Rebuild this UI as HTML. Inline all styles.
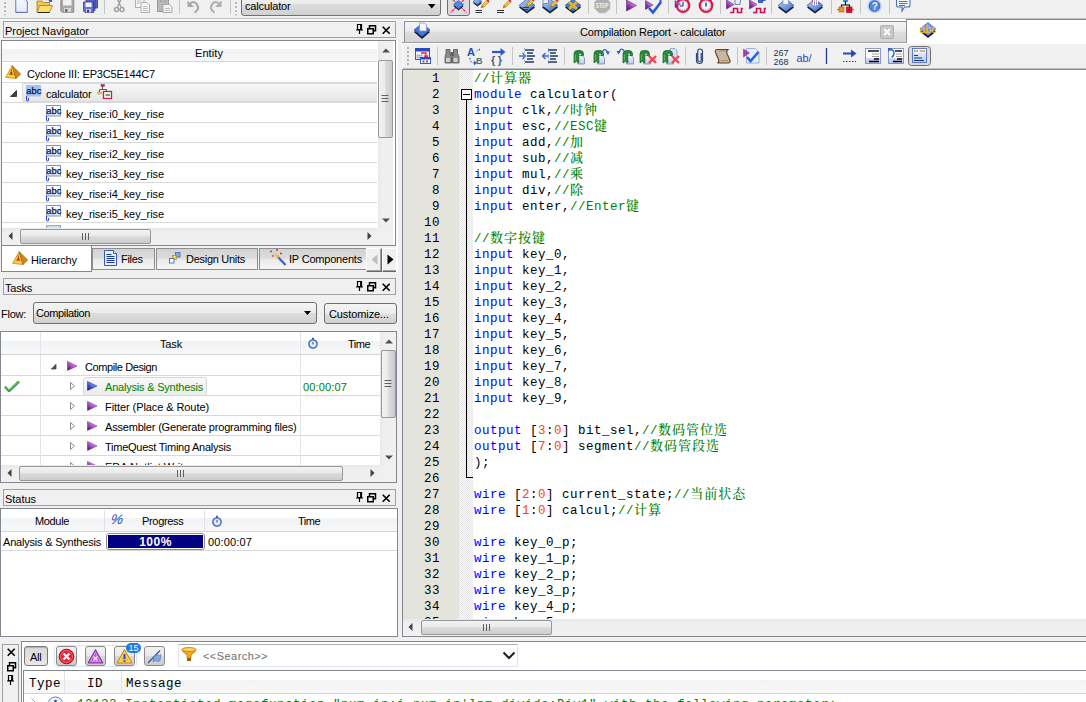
<!DOCTYPE html>
<html><head><meta charset="utf-8"><title>Quartus II</title>
<style>
html,body{margin:0;padding:0;}
body{width:1086px;height:702px;overflow:hidden;background:#f0f0f0;position:relative;font-family:"Liberation Sans","Noto Sans CJK SC",sans-serif;font-size:11px;color:#000;}
.a{position:absolute;box-sizing:border-box;}
.t{position:absolute;white-space:nowrap;line-height:14px;}
.frame{position:absolute;box-sizing:border-box;border:1px solid #a0a0a0;}
.hdr{position:absolute;box-sizing:border-box;background:linear-gradient(#ffffff 0%,#ffffff 40%,#f1f2f4 41%,#f7f8fa 100%);border-bottom:1px solid #d5d5d5;}
.row{position:absolute;box-sizing:border-box;border-bottom:1px solid #d9d9d9;background:#fff;}
.vsb{position:absolute;box-sizing:border-box;background:#f0f0f0;}
.thumb{position:absolute;box-sizing:border-box;border:1px solid #979797;border-radius:2px;}
.code{position:absolute;left:71px;white-space:pre;font-family:"Liberation Mono","Noto Sans CJK SC",monospace;font-size:12.5px;letter-spacing:0.5px;line-height:16px;height:16px;}
.ln{position:absolute;left:0px;width:37px;text-align:right;font-family:"Liberation Mono",monospace;font-size:12.5px;letter-spacing:0.5px;line-height:16px;height:16px;color:#000;}
.k{color:#0000ff}.c{color:#008000}.n{color:#ff4500}.z{font-family:"Liberation Mono","Noto Serif CJK SC","Noto Sans CJK SC",serif;font-size:13px;line-height:0;letter-spacing:1px;font-weight:500;}
</style></head><body>
<!-- SECTION: top toolbar -->
<div id="toptb" class="a" style="left:0;top:0;width:1086px;height:19px;background:#f0f0f0;overflow:hidden;">
<div class="a" style="left:0;top:18px;width:1086px;height:1px;background:#c2c2c2;"></div>
<!-- combo -->
<div class="a" style="left:241px;top:-8px;width:200px;height:24px;border:1px solid #707070;border-radius:3px;background:linear-gradient(#f4f4f4,#ebebeb 50%,#dddddd 51%,#d0d0d0);"></div>
<div class="t" style="left:245px;top:-1px;letter-spacing:-0.158px;" id="t_combo">calculator</div>
<svg class="a" style="left:428px;top:4px" width="8" height="5"><path d="M0 0h7.500L3.750 4.500z" fill="#000"/></svg>
<div class="a" style="left:447px;top:-8px;width:23px;height:24px;border:1px solid #6e6e6e;border-radius:3px;background:#dcdcdc;"></div>
<svg class="a" style="left:0;top:-3px" width="1086" height="22" viewBox="0 0 1086 22" font-family="Liberation Sans,sans-serif">
<defs>
<linearGradient id="dg" x1="0" y1="0" x2="1" y2="1"><stop offset="0" stop-color="#c4dafc"/><stop offset="1" stop-color="#3466c4"/></linearGradient>
<linearGradient id="pp" x1="0" y1="1" x2="0.800" y2="0"><stop offset="0" stop-color="#3c1460"/><stop offset="0.450" stop-color="#9840b0"/><stop offset="1" stop-color="#e8c8f0"/></linearGradient>
<g id="dia"><path d="M8 5L16 10.500 8 16.500 0 10.500z" fill="#10182c"/><path d="M8 2L16 8.500 8 14.500 0 8.500z" fill="url(#dg)" stroke="#2a50a0" stroke-width="0.7"/></g>
<g id="pen"><path d="M2 10L9 2l2.500 2.500L4.500 12z" fill="#f0c020" stroke="#a07818" stroke-width="0.6"/><path d="M9 2l1.500-1.500 2.500 2.500L11.500 4.500z" fill="#d82050"/><path d="M2 10l-1.500 4 4-2z" fill="#c08860" stroke="#704020" stroke-width="0.5"/></g>
<g id="pen2"><path d="M0 8l1-3 4.500-4.500 2 2-4.500 4.500z" fill="#f4c428" stroke="#a07818" stroke-width="0.500"/><path d="M5.500 0.500l1.200-1.200 2 2-1.200 1.200z" fill="#d82858"/><path d="M0 8l1-3 2 2z" fill="#b87850"/></g>
<g id="clock"><circle cx="8" cy="8.500" r="6.300" fill="#f0f4fc" stroke="#e01848" stroke-width="2.200"/><circle cx="8" cy="8.500" r="4.500" fill="none" stroke="#384878" stroke-width="0.7" stroke-dasharray="1 1.300"/><path d="M4 1.500l-2 1.500M12 1.500l2 1.500" stroke="#404040" stroke-width="1.600"/></g>
<g id="wave"><path d="M4 15.500h3.500v-4h4v4h4v-4h1.500" fill="none" stroke="#d01058" stroke-width="1.600"/></g>
</defs>
<!-- grip -->
<g fill="#b8b8b8"><rect x="4" y="5" width="2" height="2"/><rect x="4" y="9" width="2" height="2"/><rect x="4" y="13" width="2" height="2"/><rect x="4" y="17" width="1.500" height="1.500"/><rect x="235" y="5" width="2" height="2"/><rect x="235" y="9" width="2" height="2"/><rect x="235" y="13" width="2" height="2"/><rect x="235" y="17" width="1.500" height="1.500"/></g>
<path d="M104.500 3v14M179.500 3v14M230.500 3v14M588.500 3v14M616.500 3v14M668.500 3v14M720.500 3v14M771.500 3v14M831.500 3v14M860.500 3v14M889.500 3v14" stroke="#c4c4c4"/>
<!-- new -->
<g transform="translate(15,0)"><path d="M0.800 0.800h8l3.500 3.500v11.200h-11.500z" fill="url(#pg)" stroke="#5868a8" stroke-width="0.9"/><path d="M1.500 1.500h7v4h3v9h-10z" fill="#fff" opacity="0.6"/></g>
<!-- open -->
<g transform="translate(36,0)"><path d="M1 4h5l1.500 1.500h6v9.500h-12.500z" fill="#f0c850" stroke="#a07818" stroke-width="0.8"/><path d="M3.500 8.500h13l-3 7h-12.500z" fill="#f8dc70" stroke="#a87818" stroke-width="0.8"/><path d="M2 15.500h11.500" stroke="#302010" stroke-width="1"/><path d="M10 1.500q3-2 5 1l1-1v3.500h-3.500l1-1q-1.500-2-3.500-0.500z" fill="#3060c0"/></g>
<!-- save gray -->
<g transform="translate(60,0)"><path d="M0.800 0.800h13l0 14.500h-11.500l-1.500-1.500z" fill="#a8a8a8" stroke="#808080" stroke-width="0.8"/><rect x="3" y="1" width="8.500" height="7.500" fill="#f0f0f0"/><rect x="4" y="11" width="7" height="4" fill="#d8d8d8"/><rect x="5" y="12" width="2.500" height="3" fill="#707070"/></g>
<!-- save all -->
<g transform="translate(83,0)"><path d="M5.500 0.500h9v10.500h-9z" fill="#5860c8" stroke="#303890" stroke-width="0.8"/><path d="M3 2.500h9v11h-9z" fill="#5860c8" stroke="#303890" stroke-width="0.8"/><path d="M0.500 5h10v10.500h-8.500l-1.500-1.500z" fill="#6870d8" stroke="#303890" stroke-width="0.8"/><rect x="2.500" y="5.500" width="6" height="4.500" fill="#f0f4ff"/><rect x="3" y="12" width="5" height="3.500" fill="#c8c8d8"/><rect x="4" y="12.800" width="2" height="2.700" fill="#404060"/></g>
<!-- cut -->
<g transform="translate(114,0)" fill="none" stroke="#a0a0a0"><path d="M2.500 0l4.500 10M8 0L3.500 10" stroke-width="1.400"/><circle cx="2.500" cy="12.500" r="2" stroke-width="1.500"/><circle cx="8" cy="12.500" r="2" stroke-width="1.500"/></g>
<!-- copy -->
<g transform="translate(135,0)"><path d="M0.500 0.500h6l2.500 2.500v7.500h-8.500z" fill="#f4f4f4" stroke="#a8a8a8" stroke-width="0.9"/><path d="M6 5.500h6l2.500 2.500v7.500h-8.500z" fill="#f4f4f4" stroke="#a8a8a8" stroke-width="0.9"/><path d="M8 9.500h4.500M8 11.500h4.500M8 13.500h4.500M2 4h4M2 6h3" stroke="#b0b0b0" stroke-width="0.8"/></g>
<!-- paste -->
<g transform="translate(157,0)"><path d="M0.500 2.500h11v12h-11z" fill="#b8b8b8" stroke="#909090" stroke-width="0.9"/><rect x="3.500" y="0.500" width="5" height="3.500" fill="#d8d8d8" stroke="#909090" stroke-width="0.8"/><path d="M6 7.500h6.500l2.500 2.500v5.500h-9z" fill="#f4f4f4" stroke="#a0a0a0" stroke-width="0.9"/><path d="M8 11.500h5M8 13.500h5" stroke="#b0b0b0" stroke-width="0.8"/></g>
<!-- undo / redo -->
<g transform="translate(187,0)"><path d="M2 7.500q5-5 8 0t-2.500 8" fill="none" stroke="#a8a8a8" stroke-width="2.200"/><path d="M0.500 3.500v6.500h6.500z" fill="#a8a8a8"/></g>
<g transform="translate(210,0)"><path d="M10 7.500q-5-5-8 0t2.500 8" fill="none" stroke="#b0b0b0" stroke-width="2.200"/><path d="M11.500 3.500v6.500h-6.500z" fill="#b0b0b0"/></g>
<!-- pink X diamond -->
<g transform="translate(450,0)"><path d="M0.500 0.500l16 15M16.500 0.500l-16 15" stroke="#f02070" stroke-width="1.300" stroke-dasharray="2.500 1"/><path d="M8.500 5l5 4-5 4.500-5-4.500z" fill="#10182c"/><path d="M8.500 3.500l5 4-5 4.500-5-4.500z" fill="#5088e0" stroke="#2a50a0" stroke-width="0.6"/></g>
<!-- diamond + pencil + lines -->
<g transform="translate(473,0)"><path d="M4.500 3l4.500 3-4.500 3.500-4.500-3.500z" fill="#10182c"/><path d="M4.500 1.500l4.500 3-4.500 3.500-4.500-3.500z" fill="url(#dg)" stroke="#2a50a0" stroke-width="0.600"/><g transform="translate(8,3)"><use href="#pen2"/></g><path d="M2.500 13.500h6.500M2.500 15.500h6.500" stroke="#303030" stroke-width="1"/></g>
<g transform="translate(497,0)"><g transform="translate(6,3)"><use href="#pen2"/></g><path d="M0 13.500h7M0 15.500h7" stroke="#303030" stroke-width="1"/></g>
<g transform="translate(519,0)"><use href="#dia"/><g transform="translate(7,2)"><use href="#pen2"/></g><path d="M4 10.500h6M5 12.500h4" stroke="#203060" stroke-width="0.900"/></g>
<g transform="translate(542,0)"><use href="#dia"/><path d="M1 0.500h5.500v6h-5.500z" fill="#e8eefc" stroke="#6078b8" stroke-width="0.800"/><g transform="translate(8,2.500)"><use href="#pen2"/></g></g>
<g transform="translate(565,0)"><path d="M8 5L16 10.500 8 16.500 0 10.500z" fill="#10182c"/><path d="M8 2L16 8.500 8 14.500 0 8.500z" fill="#4878c8" stroke="#2a50a0" stroke-width="0.7"/><path d="M4 5l8 7M12 5l-8 7" stroke="#f0c020" stroke-width="2.600"/><path d="M4 5l8 7M12 5l-8 7" stroke="#d09810" stroke-width="0.6"/></g>
<!-- STOP -->
<g transform="translate(594,0)"><path d="M5 0.500h6.500l4.500 4.500v6.500l-4.500 4.500h-6.500l-4.500-4.500v-6.500z" fill="#b0b0b0" stroke="#c8c8c8" stroke-width="0.8"/><text x="1.800" y="11.300" font-size="7" font-weight="bold" fill="#f4f4f4" textLength="12.500" lengthAdjust="spacingAndGlyphs">STOP</text></g>
<!-- play -->
<g transform="translate(626,0)"><path d="M0.500 3v11l10-5.500z" fill="url(#pp)" stroke="#682090" stroke-width="0.6"/></g>
<g transform="translate(645,0)"><path d="M0.500 3.500v9l7.500-4.500z" fill="url(#pp)" stroke="#682090" stroke-width="0.6"/><path d="M4 11l4 4.500L16 5" fill="none" stroke="#2858d8" stroke-width="2.600"/><path d="M11 1.500h4.500v3.500" fill="none" stroke="#2858d8" stroke-width="2"/></g>
<g transform="translate(675,0)"><use href="#clock"/><path d="M8 5v4h-3" stroke="#203060" stroke-width="1" fill="none"/><path d="M0 3.500v7l5.500-3.500z" fill="url(#pp)" stroke="#682090" stroke-width="0.5"/></g>
<g transform="translate(698,0)"><use href="#clock"/><path d="M8 5.500v4" stroke="#203060" stroke-width="1.300"/></g>
<g transform="translate(726,0)"><path d="M9 0.500h6l-1 7h-5z" fill="#e8eefc" stroke="#5068a8" stroke-width="0.8"/><path d="M0.500 3v9l7.500-4.500z" fill="url(#pp)" stroke="#682090" stroke-width="0.6"/><use href="#wave"/></g>
<g transform="translate(749,0)"><path d="M9.500 1.500h4v4h-4z" fill="#3868d0" stroke="#2040a0" stroke-width="0.8"/><path d="M12 3h4.500" stroke="#2858c8" stroke-width="2"/><path d="M0.500 3v9l7.500-4.500z" fill="url(#pp)" stroke="#682090" stroke-width="0.6"/><use href="#wave"/></g>
<g transform="translate(778,0)"><use href="#dia"/><path d="M5 0.500h5.500v7h-5.500z" fill="#f0f4fc" stroke="#8090b8" stroke-width="0.7"/></g>
<g transform="translate(807,0)"><use href="#dia"/><path d="M1 1q4 0 5 3t6 2" fill="none" stroke="#d01058" stroke-width="1.300"/><path d="M6.500 2v6M8.500 2.500v6M10.500 3v5" stroke="#fff" stroke-width="1.300"/></g>
<g transform="translate(837,0)"><rect x="6.500" y="0.500" width="4" height="4" fill="#20a0e8" stroke="#1060c0" stroke-width="0.7"/><path d="M8.500 4.500v3.500M4.500 11v-3h8v3" fill="none" stroke="#000" stroke-width="1.200"/><rect x="2" y="10" width="5" height="5" fill="#f09020" stroke="#c06010" stroke-width="0.7"/><rect x="9.500" y="10" width="5.500" height="5.500" fill="#e81030" stroke="#a00820" stroke-width="0.7"/><path d="M0 12.500h2M15 12.500h2" stroke="#606060" stroke-width="0.9"/><rect x="11.500" y="12" width="1.500" height="1.500" fill="#400"/></g>
<g transform="translate(867,0)"><circle cx="7.500" cy="9" r="6.500" fill="#5888e0" stroke="#b8ccf4" stroke-width="1.400"/><circle cx="7.500" cy="9" r="5" fill="none" stroke="#3060c0" stroke-width="0.8"/><text x="4.700" y="12.600" font-size="10" font-weight="bold" fill="#e8f0ff">?</text></g>
<g transform="translate(896,0)"><path d="M2.500 -1h9.500q2 0 2 2v7q0 2-2 2h-3.500l-2.500 4v-4h-3.500q-2 0-2-2v-7q0-2 2-2z" fill="#f4f7fe" stroke="#4870c0" stroke-width="1.100"/><path d="M3 4.500h8.500M3 6.500h8.500M3 8.500h6" stroke="#304880" stroke-width="0.800"/></g>
</svg>
</div>
<div class="a" style="left:0;top:19px;width:397px;height:2px;background:#f8f8f8;"></div>
<!-- SECTION: project navigator -->
<div id="pn">
<svg width="0" height="0" style="position:absolute">
<defs>
<g id="abc"><rect x="0.500" y="0.500" width="14" height="10.500" fill="#e2eaf8" stroke="#8494b8"/><rect x="1" y="1" width="13" height="3" fill="#f8fafe"/><text x="0.300" y="9" font-family="Liberation Sans,sans-serif" font-size="9" fill="#0c1848" stroke="#0c1848" stroke-width="0.250" textLength="15" lengthAdjust="spacingAndGlyphs">abc</text><path d="M0.500 11v4q0 1 1 1t1-1v-2" fill="none" stroke="#2848c8" stroke-width="1"/></g>
<g id="abcs"><rect x="0" y="0" width="15" height="11.500" fill="#a2c4f2"/><text x="0.300" y="9" font-family="Liberation Sans,sans-serif" font-size="9" fill="#0c1848" stroke="#0c1848" stroke-width="0.250" textLength="15" lengthAdjust="spacingAndGlyphs">abc</text><path d="M0.500 11v4q0 1 1 1t1-1v-2" fill="none" stroke="#2848c8" stroke-width="1"/></g>
<g id="warn"><path d="M7.200 0.700L0.700 12.300l10.300 1.200z" fill="#fcd23a" stroke="#c89018" stroke-width="0.9" stroke-linejoin="round"/><path d="M7.200 0.700L15.500 9l-4.500 4.500z" fill="#d4861e" stroke="#a86810" stroke-width="0.9" stroke-linejoin="round"/><path d="M6.300 4.500v2.500M4.500 10l1.800-3 1.800 3M6.300 7v3" stroke="#c01818" stroke-width="0.9" fill="none"/></g>
<g id="pin"><path d="M1.5 0.5h4v5h-4zM0 6h7M3.5 6v4" fill="none" stroke="#000" stroke-width="1.2"/><path d="M4.8 0.5v5" stroke="#000" stroke-width="1.4"/></g>
<g id="rest"><path d="M2.5 3V0.8h6v5H6.5" fill="none" stroke="#000" stroke-width="1.5"/><rect x="0.75" y="3.75" width="5.5" height="5" fill="none" stroke="#000" stroke-width="1.5"/></g>
<g id="xx"><path d="M0.7 0.7l7 7M7.7 0.7l-7 7" stroke="#000" stroke-width="1.6"/></g>
</defs></svg>
<!-- title -->
<div class="frame" style="left:3px;top:21px;width:393px;height:17px;"></div>
<div class="t" style="left:5px;top:24px;letter-spacing:-0.022px;" id="t_pn">Project Navigator</div>
<svg class="a" style="left:356px;top:24px" width="8" height="11"><use href="#pin"/></svg>
<svg class="a" style="left:367px;top:25px" width="10" height="10"><use href="#rest"/></svg>
<svg class="a" style="left:382px;top:26px" width="9" height="9"><use href="#xx"/></svg>
<!-- tree frame -->
<div class="a" style="left:1px;top:40px;width:395px;height:206px;background:#fff;border:1px solid #828790;"></div>
<div class="hdr" style="left:2px;top:41px;width:375px;height:21px;"></div>
<div class="t" style="left:195px;top:46px;letter-spacing:0.081px;" id="t_entity">Entity</div>
<!-- rows -->
<div class="row" style="left:2px;top:62px;width:375px;height:21px;"></div>
<div class="row" style="left:2px;top:83px;width:375px;height:20px;"></div>
<div class="a" style="left:22px;top:83px;width:355px;height:19px;background:linear-gradient(#f8f8f8,#e6e6e6);border:1px solid #dadada;border-right:none;border-radius:2px 0 0 2px;"></div>
<div class="row" style="left:2px;top:103px;width:375px;height:20px;"></div>
<div class="row" style="left:2px;top:123px;width:375px;height:20px;"></div>
<div class="row" style="left:2px;top:143px;width:375px;height:20px;"></div>
<div class="row" style="left:2px;top:163px;width:375px;height:20px;"></div>
<div class="row" style="left:2px;top:183px;width:375px;height:20px;"></div>
<div class="row" style="left:2px;top:203px;width:375px;height:20px;"></div>
<svg class="a" style="left:5px;top:65px" width="17" height="15"><use href="#warn"/></svg>
<div class="t" style="left:27px;top:67px;letter-spacing:-0.195px;" id="t_cyc">Cyclone III: EP3C5E144C7</div>
<svg class="a" style="left:10px;top:90px" width="7" height="7"><path d="M6.5 0.5v6h-6z" fill="#404040" stroke="#262626" stroke-width="0.8"/></svg>
<svg class="a" style="left:26px;top:85px" width="16" height="17"><use href="#abcs"/></svg>
<div class="t" style="left:46px;top:87px;letter-spacing:-0.158px;" id="t_calc">calculator</div>
<svg class="a" style="left:97px;top:84px" width="16" height="15"><path d="M5.500 2.500v3M2.500 8v-2.500h7v2" fill="none" stroke="#505860" stroke-width="1"/><rect x="4" y="0.500" width="3.500" height="2" fill="#e01848" stroke="#803060" stroke-width="0.5"/><rect x="0.800" y="8" width="3.500" height="2" fill="#f0d838" stroke="#a09030" stroke-width="0.5"/><rect x="6.500" y="7.500" width="8" height="7" fill="#fff" stroke="#e0104a" stroke-width="1.300"/><rect x="8.500" y="10" width="4.500" height="2.200" fill="#58b070"/></svg>
<svg class="a" style="left:46px;top:105px" width="16" height="17"><use href="#abc"/></svg>
<div class="t" style="left:66px;top:107px;letter-spacing:-0.083px;">key_rise:i0_key_rise</div>
<svg class="a" style="left:46px;top:125px" width="16" height="17"><use href="#abc"/></svg>
<div class="t" style="left:66px;top:127px;letter-spacing:-0.083px;">key_rise:i1_key_rise</div>
<svg class="a" style="left:46px;top:145px" width="16" height="17"><use href="#abc"/></svg>
<div class="t" style="left:66px;top:147px;letter-spacing:-0.083px;">key_rise:i2_key_rise</div>
<svg class="a" style="left:46px;top:165px" width="16" height="17"><use href="#abc"/></svg>
<div class="t" style="left:66px;top:167px;letter-spacing:-0.083px;">key_rise:i3_key_rise</div>
<svg class="a" style="left:46px;top:185px" width="16" height="17"><use href="#abc"/></svg>
<div class="t" style="left:66px;top:187px;letter-spacing:-0.083px;">key_rise:i4_key_rise</div>
<svg class="a" style="left:46px;top:205px" width="16" height="17"><use href="#abc"/></svg>
<div class="t" style="left:66px;top:207px;letter-spacing:-0.083px;" id="t_k5">key_rise:i5_key_rise</div>
<svg class="a" style="left:46px;top:225px" width="16" height="3"><rect x="0.5" y="0.5" width="14" height="6" fill="#cfe0f5" stroke="#8fa9cc"/></svg>
<!-- v scrollbar -->
<div class="vsb" style="left:378px;top:41px;width:15px;height:187px;background:linear-gradient(90deg,#e8e8e8,#efefef 25%,#f0f0f0);"></div>
<svg class="a" style="left:382px;top:48px" width="8" height="5"><path d="M0 4.5L4 0.5 8 4.5z" fill="#505050"/></svg>
<div class="thumb" style="left:378px;top:60px;width:15px;height:78px;background:linear-gradient(90deg,#f3f3f3,#eaeaea 45%,#dadada 52%,#cdcdd0);"></div>
<svg class="a" style="left:381px;top:94px" width="9" height="9"><path d="M0.5 1.5h7M0.5 4.5h7M0.5 7.5h7" stroke="#606060" stroke-width="1"/></svg>
<svg class="a" style="left:382px;top:218px" width="8" height="5"><path d="M0 0.5L4 4.5 8 0.5z" fill="#505050"/></svg>
<!-- h scrollbar -->
<div class="vsb" style="left:2px;top:228px;width:375px;height:17px;background:linear-gradient(#e8e8e8,#efefef 25%,#f0f0f0);"></div>
<div class="a" style="left:377px;top:228px;width:16px;height:17px;background:#f0f0f0;"></div>
<svg class="a" style="left:8px;top:232px" width="5" height="8"><path d="M4.5 0L0.5 4 4.5 8z" fill="#404040"/></svg>
<div class="thumb" style="left:20px;top:229px;width:131px;height:15px;background:linear-gradient(#f3f3f3,#eaeaea 45%,#dadada 52%,#cdcdd0);"></div>
<svg class="a" style="left:81px;top:233px" width="9" height="8"><path d="M1.5 0v7M4.5 0v7M7.5 0v7" stroke="#606060" stroke-width="1"/></svg>
<svg class="a" style="left:367px;top:232px" width="5" height="8"><path d="M0.5 0L4.5 4 0.5 8z" fill="#404040"/></svg>
<!-- tabs -->
<div class="a" style="left:92px;top:248px;width:63px;height:22px;background:linear-gradient(#d2d2d2,#dcdcdc 45%,#ececec 55%,#f4f4f4);border:1px solid #8e8e8e;"></div>
<div class="a" style="left:156px;top:248px;width:102px;height:22px;background:linear-gradient(#d2d2d2,#dcdcdc 45%,#ececec 55%,#f4f4f4);border:1px solid #8e8e8e;"></div>
<div class="a" style="left:259px;top:248px;width:108px;height:22px;background:linear-gradient(#d2d2d2,#dcdcdc 45%,#ececec 55%,#f4f4f4);border:1px solid #8e8e8e;border-right:none;"></div>
<div class="a" style="left:1px;top:246px;width:91px;height:26px;background:#fff;border:1px solid #828790;border-top:none;"></div>
<svg class="a" style="left:12px;top:251px" width="17" height="15"><use href="#warn"/></svg>
<div class="t" style="left:31px;top:253px;letter-spacing:-0.120px;" id="t_hier">Hierarchy</div>
<svg class="a" style="left:104px;top:250px" width="14" height="16"><path d="M0.5 0.5h9l3 3v12h-12z" fill="#e8eefc" stroke="#3858b0" stroke-width="1"/><path d="M9.5 0.5v3h3" fill="#fff" stroke="#3858b0" stroke-width="1"/><path d="M2.5 4.5h5M2.5 6.5h8M2.5 8.5h8M2.5 10.5h8M2.5 12.5h8" stroke="#1838a0" stroke-width="1"/></svg>
<div class="t" style="left:121px;top:252px;letter-spacing:-0.327px;" id="t_files">Files</div>
<svg class="a" style="left:168px;top:251px" width="13" height="13"><rect x="7.500" y="1.500" width="4.500" height="4.500" fill="#88a8e8" stroke="#5070c0" stroke-width="0.900"/><rect x="4.500" y="4.500" width="4" height="4" fill="#f0d840" stroke="#b09820" stroke-width="0.800"/><rect x="1.500" y="7.500" width="4.500" height="4.500" fill="#f8faff" stroke="#5868a8" stroke-width="0.900"/></svg>
<div class="t" style="left:186px;top:252px;letter-spacing:-0.280px;" id="t_du">Design Units</div>
<svg class="a" style="left:269px;top:249px" width="18" height="18"><path d="M8 7l8.5 9" stroke="#3a60c8" stroke-width="2.2"/><path d="M6.5 5.5l3 3" stroke="#e8c030" stroke-width="2.2"/><path d="M1 2.5h2M7 1h2M11 4.500h2M3 7h1.500" stroke="#e03020" stroke-width="1.5"/><path d="M4.5 4.5h1" stroke="#e8c030" stroke-width="1.5"/></svg>
<div class="t" style="left:289px;top:252px;letter-spacing:-0.202px;" id="t_ip">IP Components</div>
<div class="a" style="left:366px;top:248px;width:16px;height:24px;background:#f0f0f0;border-left:1px solid #fff;border-top:1px solid #fff;border-right:1px solid #696969;border-bottom:1px solid #696969;box-shadow:inset -1px -1px 0 #a0a0a0;"></div>
<div class="a" style="left:382px;top:248px;width:16px;height:24px;background:#f0f0f0;border-left:1px solid #fff;border-top:1px solid #fff;border-right:1px solid #696969;border-bottom:1px solid #696969;box-shadow:inset -1px -1px 0 #a0a0a0;"></div>
<svg class="a" style="left:371px;top:254px" width="7" height="11"><path d="M6.5 0.500v10L0.500 5.500z" fill="#bdbdbd"/></svg>
<svg class="a" style="left:387px;top:254px" width="7" height="11"><path d="M0.500 0.500v10l6-5z" fill="#000"/></svg>
</div>
<!-- SECTION: tasks -->
<div id="tasks">
<svg width="0" height="0" style="position:absolute"><defs>
<linearGradient id="gpl" x1="0" y1="1" x2="0.800" y2="0"><stop offset="0" stop-color="#3c1460"/><stop offset="0.450" stop-color="#a048b8"/><stop offset="1" stop-color="#e8c8f0"/></linearGradient>
<linearGradient id="gbl" x1="0" y1="1" x2="0.800" y2="0"><stop offset="0" stop-color="#141c70"/><stop offset="0.450" stop-color="#4058d0"/><stop offset="1" stop-color="#c0ccf8"/></linearGradient>
<g id="playp"><path d="M0.5 0.5v9l9.500-4.500z" fill="url(#gpl)" stroke="#7a2a98" stroke-width="0.6"/></g>
<g id="playb"><path d="M0.5 0.5v9l9.500-4.500z" fill="url(#gbl)" stroke="#2030b0" stroke-width="0.6"/></g>
<g id="exp"><path d="M0.5 0.5v7l4-3.500z" fill="#fff" stroke="#8a8a8a" stroke-width="1"/></g>
<g id="clk"><circle cx="5" cy="7" r="4.200" fill="#c4d8f8" stroke="#3a62b8" stroke-width="1.300"/><circle cx="5" cy="7" r="2.600" fill="#eef4ff"/><path d="M5 5v2.500M4 1.300h2M5 1.500v1.500" stroke="#2a4ea8" stroke-width="1.100" fill="none"/></g>
</defs></svg>
<div class="frame" style="left:3px;top:278px;width:393px;height:17px;"></div>
<div class="t" style="left:5px;top:281px;letter-spacing:-0.225px;">Tasks</div>
<svg class="a" style="left:356px;top:281px" width="8" height="11"><use href="#pin"/></svg>
<svg class="a" style="left:367px;top:282px" width="10" height="10"><use href="#rest"/></svg>
<svg class="a" style="left:382px;top:283px" width="9" height="9"><use href="#xx"/></svg>
<div class="t" style="left:1px;top:307px;letter-spacing:-0.256px;">Flow:</div>
<div class="a" style="left:33px;top:302px;width:284px;height:22px;border:1px solid #707070;border-radius:3px;background:linear-gradient(#f4f4f4,#ebebeb 50%,#dddddd 51%,#d0d0d0);"></div>
<div class="t" style="left:36px;top:306px;letter-spacing:-0.372px;" id="t_comp">Compilation</div>
<svg class="a" style="left:304px;top:311px" width="8" height="5"><path d="M0 0h7L3.500 4z" fill="#000"/></svg>
<div class="a" style="left:324px;top:303px;width:73px;height:21px;border:1px solid #707070;border-radius:3px;background:linear-gradient(#f4f4f4,#ebebeb 50%,#dddddd 51%,#d0d0d0);"></div>
<div class="t" style="left:329px;top:307px;letter-spacing:-0.095px;" id="t_cust">Customize...</div>
<!-- table -->
<div class="a" style="left:0px;top:331px;width:397px;height:152px;background:#fff;border:1px solid #828790;"></div>
<div class="hdr" style="left:1px;top:332px;width:379px;height:23px;"></div>
<div class="a" style="left:40px;top:332px;width:1px;height:22px;background:#e0e3e8;"></div>
<div class="a" style="left:300px;top:332px;width:1px;height:22px;background:#e0e3e8;"></div>
<div class="t" style="left:160px;top:337px;letter-spacing:-0.156px;">Task</div>
<svg class="a" style="left:308px;top:337px" width="10" height="12"><use href="#clk"/></svg>
<div class="t" style="left:348px;top:337px;letter-spacing:-0.512px;">Time</div>
<div class="row" style="left:1px;top:355px;width:379px;height:21px;"></div>
<div class="row" style="left:1px;top:376px;width:379px;height:20px;"></div>
<div class="row" style="left:1px;top:396px;width:379px;height:20px;"></div>
<div class="row" style="left:1px;top:416px;width:379px;height:20px;"></div>
<div class="row" style="left:1px;top:436px;width:379px;height:20px;"></div>
<div class="a" style="left:40px;top:355px;width:1px;height:110px;background:#e4e4e4;"></div>
<div class="a" style="left:300px;top:355px;width:1px;height:110px;background:#e4e4e4;"></div>
<svg class="a" style="left:50px;top:363px" width="7" height="7"><path d="M6 1.300v4.700h-4.700z" fill="#585858" stroke="#383838" stroke-width="0.7"/></svg>
<svg class="a" style="left:67px;top:361px" width="11" height="11"><use href="#playp"/></svg>
<div class="t" style="left:85px;top:360px;letter-spacing:-0.404px;">Compile Design</div>
<svg class="a" style="left:4px;top:380px" width="16" height="12"><path d="M1 6.500l4 4.500L15 1.500" fill="none" stroke="#3c9a3c" stroke-width="2.600"/><path d="M1 6l4 4L15 1" fill="none" stroke="#7ed07e" stroke-width="1"/></svg>
<div class="a" style="left:83px;top:377px;width:124px;height:19px;background:linear-gradient(#fafafa,#ebebeb);border:1px solid #d6d6d6;border-radius:3px;"></div>
<svg class="a" style="left:70px;top:382px" width="6" height="9"><use href="#exp"/></svg>
<svg class="a" style="left:87px;top:381px" width="11" height="11"><use href="#playb"/></svg>
<div class="t" style="left:105px;top:380px;color:#008000;letter-spacing:-0.205px;" id="t_as">Analysis &amp; Synthesis</div>
<div class="t" style="left:303px;top:380px;color:#008000;letter-spacing:0.146px;" id="t_tm">00:00:07</div>
<svg class="a" style="left:70px;top:402px" width="6" height="9"><use href="#exp"/></svg>
<svg class="a" style="left:87px;top:401px" width="11" height="11"><use href="#playp"/></svg>
<div class="t" style="left:105px;top:400px;letter-spacing:-0.080px;">Fitter (Place &amp; Route)</div>
<svg class="a" style="left:70px;top:422px" width="6" height="9"><use href="#exp"/></svg>
<svg class="a" style="left:87px;top:421px" width="11" height="11"><use href="#playp"/></svg>
<div class="t" style="left:105px;top:420px;letter-spacing:-0.189px;" id="t_asm">Assembler (Generate programming files)</div>
<svg class="a" style="left:70px;top:442px" width="6" height="9"><use href="#exp"/></svg>
<svg class="a" style="left:87px;top:441px" width="11" height="11"><use href="#playp"/></svg>
<div class="t" style="left:105px;top:440px;letter-spacing:-0.250px;">TimeQuest Timing Analysis</div>
<div class="a" style="left:1px;top:456px;width:379px;height:9px;overflow:hidden;">
<svg class="a" style="left:69px;top:6px" width="6" height="9"><use href="#exp"/></svg>
<svg class="a" style="left:86px;top:5px" width="11" height="11"><use href="#playp"/></svg>
<div class="t" style="left:104px;top:4px;letter-spacing:0.010px;">EDA Netlist Writer</div>
</div>
<!-- vscroll -->
<div class="vsb" style="left:380px;top:332px;width:16px;height:133px;background:linear-gradient(90deg,#e8e8e8,#efefef 25%,#f0f0f0);"></div>
<svg class="a" style="left:385px;top:339px" width="8" height="5"><path d="M0 4.500L4 0.500 8 4.500z" fill="#505050"/></svg>
<div class="thumb" style="left:381px;top:350px;width:15px;height:68px;background:linear-gradient(90deg,#f3f3f3,#eaeaea 45%,#dadada 52%,#cdcdd0);"></div>
<svg class="a" style="left:384px;top:379px" width="9" height="9"><path d="M0.500 1.500h7M0.500 4.500h7M0.500 7.500h7" stroke="#606060" stroke-width="1"/></svg>
<svg class="a" style="left:385px;top:455px" width="8" height="5"><path d="M0 0.500L4 4.500 8 0.500z" fill="#505050"/></svg>
<!-- hscroll -->
<div class="vsb" style="left:1px;top:465px;width:379px;height:17px;background:linear-gradient(#e8e8e8,#efefef 25%,#f0f0f0);"></div>
<div class="a" style="left:380px;top:465px;width:16px;height:17px;background:#f0f0f0;"></div>
<svg class="a" style="left:7px;top:469px" width="5" height="8"><path d="M4.500 0L0.500 4 4.500 8z" fill="#404040"/></svg>
<div class="thumb" style="left:19px;top:466px;width:324px;height:15px;background:linear-gradient(#f3f3f3,#eaeaea 45%,#dadada 52%,#cdcdd0);"></div>
<svg class="a" style="left:176px;top:470px" width="9" height="8"><path d="M1.500 0v7M4.500 0v7M7.500 0v7" stroke="#606060" stroke-width="1"/></svg>
<svg class="a" style="left:370px;top:469px" width="5" height="8"><path d="M0.500 0L4.500 4 0.500 8z" fill="#404040"/></svg>
</div>
<!-- SECTION: status -->
<div id="status">
<div class="frame" style="left:3px;top:489px;width:393px;height:17px;"></div>
<div class="t" style="left:5px;top:492px;letter-spacing:-0.031px;">Status</div>
<svg class="a" style="left:356px;top:492px" width="8" height="11"><use href="#pin"/></svg>
<svg class="a" style="left:367px;top:493px" width="10" height="10"><use href="#rest"/></svg>
<svg class="a" style="left:382px;top:494px" width="9" height="9"><use href="#xx"/></svg>
<div class="a" style="left:0px;top:508px;width:398px;height:129px;background:#fff;border:1px solid #828790;"></div>
<div class="hdr" style="left:1px;top:509px;width:396px;height:23px;"></div>
<div class="a" style="left:104px;top:510px;width:1px;height:21px;background:#e0e3e8;"></div>
<div class="a" style="left:204px;top:510px;width:1px;height:21px;background:#e0e3e8;"></div>
<div class="t" style="left:35px;top:514px;letter-spacing:-0.346px;">Module</div>
<div class="t" style="left:111px;top:512px;font-size:14px;font-style:italic;color:#2848b0;transform:skewX(-10deg);">%</div>
<div class="t" style="left:142px;top:514px;letter-spacing:-0.316px;">Progress</div>
<svg class="a" style="left:212px;top:515px" width="10" height="12"><use href="#clk"/></svg>
<div class="t" style="left:298px;top:514px;letter-spacing:-0.512px;">Time</div>
<div class="row" style="left:1px;top:532px;width:396px;height:19px;"></div>
<div class="t" style="left:3px;top:535px;letter-spacing:-0.205px;" id="t_as2">Analysis &amp; Synthesis</div>
<div class="a" style="left:106px;top:533px;width:99px;height:17px;border:1px solid #8a8a8a;border-radius:3px;background:#fff;"></div>
<div class="a" style="left:108px;top:535px;width:95px;height:13px;background:#000080;"></div>
<div class="t" style="left:108px;top:535px;width:95px;text-align:center;color:#fff;font-weight:bold;font-size:12px;letter-spacing:0.5px;" id="t_100">100%</div>
<div class="t" style="left:208px;top:535px;letter-spacing:0.146px;" id="t_tm2">00:00:07</div>
</div>
<!-- SECTION: editor -->
<div id="editor">
<!-- top dark line + white strip -->
<div class="a" style="left:403px;top:18px;width:683px;height:1px;background:#c2c2c2;"></div>
<div class="a" style="left:403px;top:19px;width:503px;height:2px;background:#fcfcfc;"></div>
<div class="a" style="left:906px;top:19px;width:180px;height:1px;background:#828790;"></div>
<div class="a" style="left:907px;top:20px;width:179px;height:24px;background:#fff;"></div>
<!-- tab -->
<div class="a" style="left:404px;top:21px;width:503px;height:22px;background:linear-gradient(#f3f3f3,#ececec 45%,#dedede 50%,#d4d4d4);border:1px solid #8a8f98;"></div>
<div class="a" style="left:906px;top:19px;width:1px;height:3px;background:#8a8f98;"></div>
<svg class="a" style="left:413px;top:22px" width="18" height="18"><path d="M9 4L17 10 9 17 1 10z" fill="#10182c"/><path d="M9 1.500L17 8 9 14.500 1 8z" fill="#3f78d8" stroke="#2a56a8" stroke-width="0.8"/><path d="M6.500 1h5l2 2v6h-7z" fill="#f4f6fc" stroke="#8090b8" stroke-width="0.7"/></svg>
<div class="t" style="left:580px;top:25px;letter-spacing:-0.178px;" id="t_tab">Compilation Report - calculator</div>
<div class="a" style="left:880px;top:25px;width:14px;height:14px;border:1px solid #b0b0b0;border-radius:2px;background:#c8c8c8;"></div>
<svg class="a" style="left:883px;top:28px" width="8" height="8"><path d="M1 1l6 6M7 1l-6 6" stroke="#fff" stroke-width="1.800"/></svg>
<svg class="a" style="left:919px;top:21px" width="18" height="18"><path d="M9 4L17 10.500 9 17 1 10.500z" fill="#10182c"/><path d="M9 1.500L17 8 9 14.500 1 8z" fill="#6a9cec" stroke="#4a78c8" stroke-width="0.8"/><text x="0.800" y="12" font-family="Liberation Sans,sans-serif" font-size="11" fill="#f8b418" stroke="#f8b418" stroke-width="0.3" textLength="16.500" lengthAdjust="spacingAndGlyphs">abc</text></svg>
<!-- editor toolbar -->
<div class="a" style="left:403px;top:44px;width:683px;height:24px;background:#f0f0f0;"></div>
<div id="edtb">
<svg class="a" style="left:403px;top:44px" width="683" height="24" viewBox="403 44 683 24" font-family="Liberation Sans,sans-serif">
<defs>
<linearGradient id="pg" x1="0" y1="0" x2="0" y2="1"><stop offset="0" stop-color="#f4f7fe"/><stop offset="1" stop-color="#b8c8ee"/></linearGradient>
<g id="bm"><path d="M4.500 7.500h4.500l2.500 2.500v6h-7z" fill="url(#pg)" stroke="#7888b8" stroke-width="0.800"/><path d="M1 6Q1 2.500 4.500 2.500H7Q10.500 2.500 10.500 6V7.500H8.300V6.500Q8.300 5 6.800 5Q5.800 5 5.800 6.500V15L3.400 13.200L1 15Z" fill="#2a8c3a" stroke="#0e5a1e" stroke-width="0.700"/><path d="M2.300 6.500v6" stroke="#6cc47a" stroke-width="0.800"/></g>
<g id="rx"><path d="M1 1l7 7M8 1l-7 7" stroke="#f04858" stroke-width="2.400"/></g>
</defs>
<!-- grip -->
<g fill="#b4b4b4"><rect x="407" y="47" width="2" height="2"/><rect x="407" y="51" width="2" height="2"/><rect x="407" y="55" width="2" height="2"/><rect x="407" y="59" width="2" height="2"/><rect x="407" y="63" width="2" height="2"/></g>
<!-- window icon -->
<g transform="translate(415,48)"><rect x="0.500" y="0.500" width="14" height="11" fill="#fff" stroke="#3a5cc0"/><rect x="0.500" y="0.500" width="14" height="2.500" fill="#2848c8" stroke="#2848c8"/><rect x="2" y="7" width="5" height="3" fill="#c8d0e8" stroke="#7080b0" stroke-width="0.6"/><path d="M6 5h5v4M9 7.500l2 2 2-2" fill="none" stroke="#e02040" stroke-width="1.300"/><rect x="5.500" y="9.500" width="10" height="6" fill="#fff" stroke="#3a5cc0"/><rect x="5.500" y="9.500" width="10" height="2" fill="#2848c8"/><rect x="7.500" y="12.500" width="2" height="2" fill="#506090"/><rect x="11" y="12.500" width="2" height="2" fill="#506090"/></g>
<path d="M437.500 47v18M512.500 47v18M564.500 47v18M685.500 47v18M737.500 47v18M766.500 47v18" stroke="#c4c4c4" stroke-width="1"/>
<!-- binoculars -->
<g transform="translate(444,48)"><path d="M2 1.500h4v4l1.500 3v6.500h-6.500v-6.500l1-3zM9.500 1.500h4v4l1.500 3v6.500h-6.500v-6.500l1-3z" fill="#8a8a8a" stroke="#505050" stroke-width="0.8"/><rect x="2" y="10" width="4" height="4" fill="#d0d0d0"/><rect x="9.500" y="10" width="4" height="4" fill="#d0d0d0"/><rect x="6.500" y="4" width="3" height="4" fill="#606060"/></g>
<!-- A->B -->
<g transform="translate(467,47)"><text x="0" y="9" font-size="11" font-weight="bold" fill="#2050b0">A</text><text x="9" y="17" font-size="9" font-weight="bold" fill="#606870">B</text><path d="M3 11q0 5 5 5" fill="none" stroke="#3060d0" stroke-width="1.200" stroke-dasharray="1.500 1.500"/><path d="M7 13.500l3 2.500-3 2.500z" fill="#3060d0"/><path d="M9.500 4l3-2M12.500 2v2.500" stroke="#3060d0" stroke-width="1" stroke-dasharray="1.500 1"/></g>
<!-- {} arrow -->
<g transform="translate(491,47)"><path d="M1 5h10" stroke="#3058c8" stroke-width="2.200"/><path d="M9.500 1l5 4-5 4z" fill="#3058c8"/><text x="0" y="17" font-size="11" font-weight="bold" fill="#506078" textLength="11">{}</text></g>
<!-- indent -->
<g transform="translate(519,48)"><path d="M6 2h9M8 5h6M8 8h8M8 11h6M6 14h9" stroke="#203a68" stroke-width="1.400"/><path d="M0 8h5" stroke="#3060d0" stroke-width="1.400"/><path d="M3.500 5l3 3-3 3" fill="none" stroke="#3060d0" stroke-width="1.300"/><path d="M5.500 0v16" stroke="#88a0d0" stroke-width="0.8" stroke-dasharray="1.500 1.500"/></g>
<g transform="translate(542,48)"><path d="M6 2h9M8 5h6M8 8h8M8 11h6M6 14h9" stroke="#203a68" stroke-width="1.400"/><path d="M1 8h6" stroke="#3060d0" stroke-width="1.400"/><path d="M3.500 5l-3 3 3 3" fill="none" stroke="#3060d0" stroke-width="1.300"/><path d="M6.500 0v16" stroke="#88a0d0" stroke-width="0.800" stroke-dasharray="1.500 1.500"/></g>
<!-- bookmarks -->
<g transform="translate(573,48)"><use href="#bm"/></g>
<g transform="translate(593,48)"><use href="#bm"/><path d="M9.500 3.500q2.500-4 5 0.500" fill="none" stroke="#3060d0" stroke-width="1.400"/><path d="M12.500 3.500h4.500l-2 3.500z" fill="#3060d0"/></g>
<g transform="translate(622,48)"><use href="#bm"/><path d="M2 3q-2.500-4-5 0.500" fill="none" stroke="#3060d0" stroke-width="1.400"/><path d="M-1 3h-4.500l2 3.500z" fill="#3060d0"/></g>
<g transform="translate(639,48)"><use href="#bm"/><g transform="translate(9,7)"><use href="#rx"/></g></g>
<g transform="translate(662,48)"><path d="M8 0.500h5l2 2v8h-7z" fill="#d8e0f4" stroke="#8898c0" stroke-width="0.8"/><use href="#bm"/><g transform="translate(9,7)"><use href="#rx"/></g></g>
<!-- paperclip -->
<g transform="translate(695,48)"><path d="M1.500 5v7.500q0 3 3 3t3-3V3.500q0-2.500-2.500-2.500T2.800 3.500v8.500q0 1.500 1.700 1.500T6.200 12V5" fill="none" stroke="#304878" stroke-width="1.200"/></g>
<!-- scroll -->
<g transform="translate(715,48)"><path d="M2 1.500h11q-2 1.500-1 4l3 7q0.500 2-1.500 2.500h-11q2-1 1-3.500l-3-7q-0.800-2.500 1.500-3z" fill="#c8b8a0" stroke="#6a3a28" stroke-width="1.100"/><path d="M4 3h7M6 12.500h7" stroke="#a08868" stroke-width="0.8"/></g>
<!-- check page -->
<g transform="translate(743,47)"><path d="M3.500 1.500h9l3.500 3.500v11h-12.500z" fill="#e6eefc" stroke="#8aa0d0" stroke-width="0.8"/><path d="M0.500 2v8l6-4z" fill="#a040b0" stroke="#702888" stroke-width="0.5"/><path d="M4 10l3.500 4L15.500 5" fill="none" stroke="#2860e0" stroke-width="2.600"/></g>
<!-- 267/268 -->
<text x="773.500" y="56" font-size="9" fill="#203058" textLength="15" lengthAdjust="spacingAndGlyphs">267</text>
<text x="773.500" y="64.500" font-size="9" fill="#203058" textLength="15" lengthAdjust="spacingAndGlyphs">268</text>
<text x="796.500" y="62" font-size="11" fill="#2848b0" textLength="15" lengthAdjust="spacingAndGlyphs">ab/</text>
<path d="M826.500 48v16" stroke="#283878" stroke-width="1.300"/>
<!-- arrow -->
<g transform="translate(842,48)"><path d="M1 5.500h10" stroke="#2848c0" stroke-width="2"/><path d="M9 1.500l5.500 4-5.500 4z" fill="#2848c0"/><path d="M1 13.500h13" stroke="#283878" stroke-width="1.200" stroke-dasharray="1.500 1.500"/></g>
<!-- outline icons -->
<g transform="translate(865,48)"><rect x="0.500" y="0.500" width="15" height="15" fill="url(#pg)" stroke="#7088c8" stroke-width="0.8"/><rect x="1" y="1" width="14" height="9" fill="#fff"/><path d="M3 3h11" stroke="#000" stroke-width="1.400"/><path d="M7 6h7M7 8.500h7" stroke="#a0a0a0" stroke-width="1"/><path d="M9 11h5M4 13.500h10" stroke="#000" stroke-width="1.400"/></g>
<g transform="translate(888,48)"><rect x="0.500" y="0.500" width="15" height="15" fill="url(#pg)" stroke="#7088c8" stroke-width="0.8"/><rect x="1" y="1" width="14" height="9" fill="#fff"/><path d="M7 3h7" stroke="#000" stroke-width="1.400"/><path d="M8 6h6M8 8.500h6" stroke="#a0a0a0" stroke-width="1"/><path d="M9 11h5M5 13.500h9" stroke="#000" stroke-width="1.400"/><path d="M1 1.500q5 0 5 3.500t-2.500 4" fill="none" stroke="#3060d0" stroke-width="1.400"/><path d="M0 0h4l-4 4z" fill="#3060d0"/></g>
<rect x="908.500" y="46.500" width="22" height="19" rx="3" fill="#dcdcdc" stroke="#6e6e6e"/>
<g transform="translate(912,48)"><rect x="0.500" y="0.500" width="14" height="14" fill="url(#pg)" stroke="#5070c0" stroke-width="0.9"/><rect x="1" y="1" width="13" height="3.500" fill="#fff"/><path d="M2 3h1.500M4.500 3h1.500" stroke="#203060" stroke-width="1.200"/><path d="M7.500 3h5.500" stroke="#f08020" stroke-width="1.400"/><path d="M2 7.500h4M2 10h8M2 12.500h10" stroke="#203868" stroke-width="1.200"/></g>
</svg>
</div>
<!-- code frame -->
<div class="a" style="left:396px;top:40px;width:2px;height:232px;background:#fcfcfc;"></div>
<div class="a" style="left:402px;top:42px;width:505px;height:1px;background:#a0a0a0;"></div>
<div class="a" style="left:402px;top:43px;width:505px;height:1px;background:#fcfcfc;"></div>
<div class="a" style="left:402px;top:43px;width:1px;height:26px;background:#fcfcfc;"></div>
<div class="a" style="left:403px;top:68px;width:683px;height:1px;background:#c0c0c0;"></div>
<div class="a" style="left:402px;top:69px;width:684px;height:568px;border:1px solid #828790;border-right:none;background:#fff;"></div>
<div id="code" class="a" style="left:403px;top:70px;width:683px;height:549px;overflow:hidden;background:#fff;">
<div class="a" style="left:0;top:0;width:56px;height:550px;background:#e4e4dc;"></div>
<div class="a" style="left:56px;top:0;width:14px;height:550px;background:#f4f4f4;background-image:repeating-conic-gradient(#e0e0e0 0% 25%,#ffffff 0% 50%);background-size:2px 2px;"></div>
<div class="ln" style="top:1px">1</div><div class="code" style="top:1px"><span class="c">//<span class="z">计算器</span></span></div>
<div class="ln" style="top:17px">2</div><div class="code" style="top:17px"><span class="k">module</span> calculator(</div>
<div class="ln" style="top:33px">3</div><div class="code" style="top:33px"><span class="k">input</span> clk,<span class="c">//<span class="z">时钟</span></span></div>
<div class="ln" style="top:49px">4</div><div class="code" style="top:49px"><span class="k">input</span> esc,<span class="c">//ESC<span class="z">键</span></span></div>
<div class="ln" style="top:65px">5</div><div class="code" style="top:65px"><span class="k">input</span> add,<span class="c">//<span class="z">加</span></span></div>
<div class="ln" style="top:81px">6</div><div class="code" style="top:81px"><span class="k">input</span> sub,<span class="c">//<span class="z">减</span></span></div>
<div class="ln" style="top:97px">7</div><div class="code" style="top:97px"><span class="k">input</span> mul,<span class="c">//<span class="z">乘</span></span></div>
<div class="ln" style="top:113px">8</div><div class="code" style="top:113px"><span class="k">input</span> div,<span class="c">//<span class="z">除</span></span></div>
<div class="ln" style="top:129px">9</div><div class="code" style="top:129px"><span class="k">input</span> enter,<span class="c">//Enter<span class="z">键</span></span></div>
<div class="ln" style="top:145px">10</div><div class="code" style="top:145px"></div>
<div class="ln" style="top:161px">11</div><div class="code" style="top:161px"><span class="c">//<span class="z">数字按键</span></span></div>
<div class="ln" style="top:177px">12</div><div class="code" style="top:177px"><span class="k">input</span> key_0,</div>
<div class="ln" style="top:193px">13</div><div class="code" style="top:193px"><span class="k">input</span> key_1,</div>
<div class="ln" style="top:209px">14</div><div class="code" style="top:209px"><span class="k">input</span> key_2,</div>
<div class="ln" style="top:225px">15</div><div class="code" style="top:225px"><span class="k">input</span> key_3,</div>
<div class="ln" style="top:241px">16</div><div class="code" style="top:241px"><span class="k">input</span> key_4,</div>
<div class="ln" style="top:257px">17</div><div class="code" style="top:257px"><span class="k">input</span> key_5,</div>
<div class="ln" style="top:273px">18</div><div class="code" style="top:273px"><span class="k">input</span> key_6,</div>
<div class="ln" style="top:289px">19</div><div class="code" style="top:289px"><span class="k">input</span> key_7,</div>
<div class="ln" style="top:305px">20</div><div class="code" style="top:305px"><span class="k">input</span> key_8,</div>
<div class="ln" style="top:321px">21</div><div class="code" style="top:321px"><span class="k">input</span> key_9,</div>
<div class="ln" style="top:337px">22</div><div class="code" style="top:337px"></div>
<div class="ln" style="top:353px">23</div><div class="code" style="top:353px"><span class="k">output</span> [<span class="n">3</span>:<span class="n">0</span>] bit_sel,<span class="c">//<span class="z">数码管位选</span></span></div>
<div class="ln" style="top:369px">24</div><div class="code" style="top:369px"><span class="k">output</span> [<span class="n">7</span>:<span class="n">0</span>] segment<span class="c">//<span class="z">数码管段选</span></span></div>
<div class="ln" style="top:385px">25</div><div class="code" style="top:385px">);</div>
<div class="ln" style="top:401px">26</div><div class="code" style="top:401px"></div>
<div class="ln" style="top:417px">27</div><div class="code" style="top:417px"><span class="k">wire</span> [<span class="n">2</span>:<span class="n">0</span>] current_state;<span class="c">//<span class="z">当前状态</span></span></div>
<div class="ln" style="top:433px">28</div><div class="code" style="top:433px"><span class="k">wire</span> [<span class="n">1</span>:<span class="n">0</span>] calcul;<span class="c">//<span class="z">计算</span></span></div>
<div class="ln" style="top:449px">29</div><div class="code" style="top:449px"></div>
<div class="ln" style="top:465px">30</div><div class="code" style="top:465px"><span class="k">wire</span> key_0_p;</div>
<div class="ln" style="top:481px">31</div><div class="code" style="top:481px"><span class="k">wire</span> key_1_p;</div>
<div class="ln" style="top:497px">32</div><div class="code" style="top:497px"><span class="k">wire</span> key_2_p;</div>
<div class="ln" style="top:513px">33</div><div class="code" style="top:513px"><span class="k">wire</span> key_3_p;</div>
<div class="ln" style="top:529px">34</div><div class="code" style="top:529px"><span class="k">wire</span> key_4_p;</div>
<div class="ln" style="top:545px">35</div><div class="code" style="top:545px"><span class="k">wire</span> key_5_p;</div>
<div class="a" style="left:58px;top:19px;width:11px;height:11px;border:1px solid #000;background:#fff;"></div>
<div class="a" style="left:60px;top:24px;width:7px;height:1px;background:#000;"></div>
<div class="a" style="left:63px;top:30px;width:1px;height:378px;background:#000;"></div>
<div class="a" style="left:63px;top:407px;width:7px;height:1px;background:#000;"></div>
</div>
<!-- h scrollbar -->
<div class="vsb" style="left:403px;top:619px;width:683px;height:17px;background:linear-gradient(#e8e8e8,#efefef 25%,#f0f0f0);"></div>
<svg class="a" style="left:408px;top:623px" width="5" height="8"><path d="M4.500 0L0.500 4 4.500 8z" fill="#404040"/></svg>
<div class="thumb" style="left:421px;top:620px;width:131px;height:15px;background:linear-gradient(#f3f3f3,#eaeaea 45%,#dadada 52%,#cdcdd0);"></div>
<svg class="a" style="left:482px;top:624px" width="9" height="8"><path d="M1.500 0v7M4.500 0v7M7.500 0v7" stroke="#606060" stroke-width="1"/></svg>
</div>
<!-- SECTION: messages -->
<div id="msgs">
<div class="a" style="left:0;top:637px;width:1086px;height:65px;background:#f0f0f0;"></div>
<!-- left strip -->
<div class="a" style="left:2px;top:644px;width:17px;height:60px;border:1px solid #a0a0a0;"></div>
<svg class="a" style="left:7px;top:648px" width="9" height="9"><use href="#xx"/></svg>
<svg class="a" style="left:7px;top:662px" width="10" height="10"><use href="#rest"/></svg>
<svg class="a" style="left:7px;top:675px" width="8" height="11"><use href="#pin"/></svg>
<!-- frame -->
<div class="a" style="left:21px;top:641px;width:1070px;height:70px;background:#fff;border:1px solid #828790;"></div>
<!-- All button -->
<div class="a" style="left:24px;top:646px;width:24px;height:20px;border:1px solid #7a7a7a;border-radius:3px;background:linear-gradient(#dadada,#e8e8e8);box-shadow:inset 0 1px 1px #b0b0b0;"></div>
<div class="t" style="left:30px;top:650px;letter-spacing:-0.245px;">All</div>
<div class="a" style="left:54px;top:645px;width:83px;height:22px;border:1px solid #dfe5ee;border-radius:3px;"></div>
<div class="a" style="left:56px;top:646px;width:21px;height:20px;border:1px solid #8a8a8a;border-radius:3px;background:linear-gradient(#f2f2f2,#e8e8e8 50%,#d8d8d8 51%,#cccccc);"></div>
<div class="a" style="left:85px;top:646px;width:21px;height:20px;border:1px solid #8a8a8a;border-radius:3px;background:linear-gradient(#f2f2f2,#e8e8e8 50%,#d8d8d8 51%,#cccccc);"></div>
<div class="a" style="left:114px;top:646px;width:21px;height:20px;border:1px solid #8a8a8a;border-radius:3px;background:linear-gradient(#f2f2f2,#e8e8e8 50%,#d8d8d8 51%,#cccccc);"></div>
<div class="a" style="left:144px;top:646px;width:21px;height:20px;border:1px solid #8a8a8a;border-radius:3px;background:linear-gradient(#f2f2f2,#e8e8e8 50%,#d8d8d8 51%,#cccccc);"></div>
<svg class="a" style="left:58px;top:648px" width="17" height="17"><circle cx="8.500" cy="8.500" r="7.300" fill="#e82030" stroke="#a01018" stroke-width="1"/><circle cx="8.500" cy="8.500" r="6" fill="none" stroke="#f87080" stroke-width="0.8"/><path d="M5.500 5.500l6 6M11.500 5.500l-6 6" stroke="#fff" stroke-width="2.400"/></svg>
<svg class="a" style="left:87px;top:648px" width="17" height="17"><path d="M8.500 1.500L16 15h-15z" fill="#b858d0" stroke="#8030a0" stroke-width="1" stroke-linejoin="round"/><path d="M8.500 4.500L13.500 13.500h-10z" fill="none" stroke="#d8a0e8" stroke-width="0.8"/><path d="M6.500 8.500l4 4M10.500 8.500l-4 4" stroke="#f0e0f8" stroke-width="1.600"/></svg>
<svg class="a" style="left:116px;top:648px" width="17" height="17"><path d="M8.500 1.500L16 15h-15z" fill="#f8c030" stroke="#c88810" stroke-width="1" stroke-linejoin="round"/><path d="M8.500 4.500L13.500 13.500h-10z" fill="none" stroke="#fce090" stroke-width="0.8"/><path d="M8.500 6v5" stroke="#2850b8" stroke-width="2"/><circle cx="8.500" cy="13" r="1.100" fill="#2850b8"/></svg>
<div class="a" style="left:126px;top:643px;width:15px;height:10px;border-radius:5px;background:#1878e8;"></div>
<div class="t" style="left:126px;top:641px;width:15px;text-align:center;color:#fff;font-size:9px;">15</div>
<svg class="a" style="left:146px;top:648px" width="17" height="17"><path d="M2 15L14 2.500" stroke="#305090" stroke-width="1.200"/><path d="M8 8.500q2-2.500 4-1.500t3-0.500l-1 6q-1.500 1.500-3.500 0.500t-3.500 1z" fill="#88a8e0" stroke="#5878c0" stroke-width="0.7"/></svg>
<!-- search -->
<div class="a" style="left:178px;top:644px;width:340px;height:23px;border:1px solid #e2e5ec;border-top-color:#abadb3;background:#fff;"></div>
<svg class="a" style="left:181px;top:647px" width="16" height="16"><path d="M1 2.500q7 3 14 0q0 2-5 5.500v3h-4v-3q-5-3.500-5-5.500z" fill="#f0a820" stroke="#c07808" stroke-width="0.8"/><ellipse cx="8" cy="2.500" rx="7" ry="2" fill="#f8d060" stroke="#c07808" stroke-width="0.8"/><rect x="6" y="11" width="4" height="3" fill="#a06010"/></svg>
<div class="t" style="left:203px;top:649px;color:#6e6e6e;letter-spacing:0.444px;" id="t_search">&lt;&lt;Search&gt;&gt;</div>
<svg class="a" style="left:502px;top:651px" width="14" height="9"><path d="M1.500 1.500l5.500 5.500 5.500-5.500" fill="none" stroke="#202020" stroke-width="2"/></svg>
<!-- table -->
<div class="a" style="left:23px;top:670px;width:1070px;height:40px;border:1px solid #828790;background:#fff;"></div>
<div class="a" style="left:24px;top:671px;width:1062px;height:23px;background:linear-gradient(#ffffff,#ffffff 40%,#f4f4f4 41%,#f7f7f7);border-bottom:1px solid #d5d5d5;"></div>
<div class="a" style="left:64px;top:671px;width:1px;height:22px;background:#e0e3e8;"></div>
<div class="a" style="left:121px;top:671px;width:1px;height:22px;background:#e0e3e8;"></div>
<div class="t" style="left:29px;top:677px;font-family:'Liberation Mono',monospace;font-size:12.5px;letter-spacing:0.5px;" id="t_type">Type</div>
<div class="t" style="left:87px;top:677px;font-family:'Liberation Mono',monospace;font-size:12.5px;letter-spacing:0.5px;">ID</div>
<div class="t" style="left:126px;top:677px;font-family:'Liberation Mono',monospace;font-size:12.5px;letter-spacing:0.5px;">Message</div>
<svg class="a" style="left:31px;top:698px" width="5" height="5"><path d="M0.500 0.500l4 4" stroke="#a0a0a0"/></svg>
<svg class="a" style="left:47px;top:696px" width="17" height="17"><circle cx="8.500" cy="8.500" r="7.500" fill="#f4f8ff" stroke="#5878c0" stroke-width="1"/><circle cx="8.500" cy="5" r="1.300" fill="#2848b0"/></svg>
<div class="t" style="left:77px;top:698px;font-family:'Liberation Mono',monospace;font-size:12.5px;letter-spacing:0.5px;color:#008000;">12133 Instantiated megafunction "num_in:i_num_in|lpm_divide:Div1" with the following parameter:</div>
</div>
</body></html>
